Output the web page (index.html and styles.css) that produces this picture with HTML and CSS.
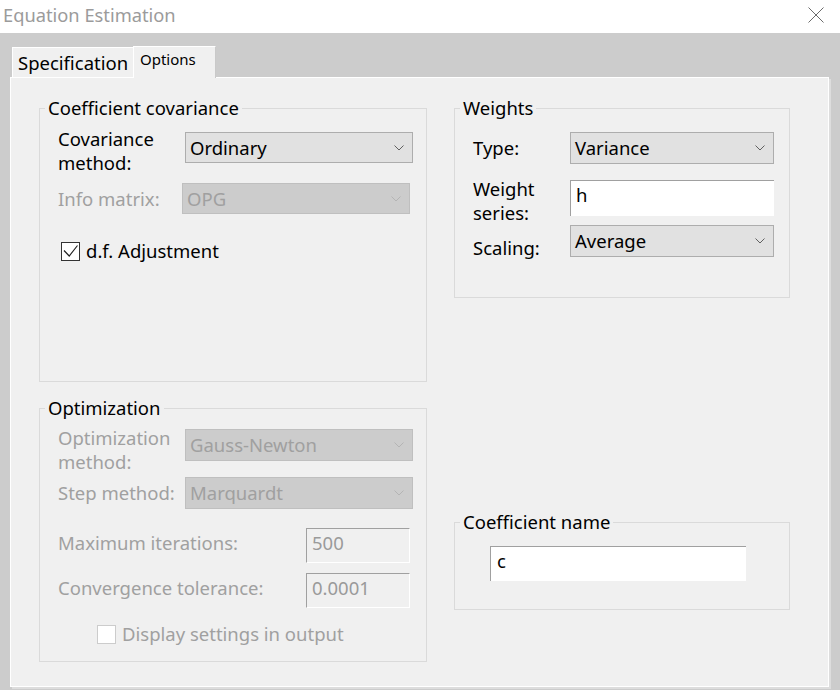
FILE: index.html
```html
<!DOCTYPE html>
<html>
<head>
<meta charset="utf-8">
<title>Equation Estimation</title>
<link rel="stylesheet" href="styles.css">
</head>
<body>
<div class="titlebar">
  <span class="title">Equation Estimation</span>
  <svg class="close" width="16" height="16" viewBox="0 0 16 16"><path d="M0.5 0.5 L15.5 15.5 M15.5 0.5 L0.5 15.5" stroke="#6b6b6b" stroke-width="1" fill="none"/></svg>
</div>
<div class="main">
  <div class="tabs">
    <div class="tab tab-spec">Specification</div>
    <div class="tab tab-active">Options</div>
  </div>
  <div class="panel">
    <div class="col col-left">
      <section class="group g-cov">
        <span class="group-title">Coefficient covariance</span>
        <div class="row row-top">
          <span class="lbl w127">Covariance<br>method:</span>
          <div class="select sel-cov"><span>Ordinary</span><svg class="chev" width="10" height="6" viewBox="0 0 10 6"><polyline points="0.5,0.5 5,5 9.5,0.5" fill="none" stroke="#606060" stroke-width="1"/></svg></div>
        </div>
        <div class="row row-info">
          <span class="lbl w124 dis">Info matrix:</span>
          <div class="select disabled"><span>OPG</span><svg class="chev" width="10" height="6" viewBox="0 0 10 6"><polyline points="0.5,0.5 5,5 9.5,0.5" fill="none" stroke="#b4b4b4" stroke-width="1"/></svg></div>
        </div>
        <div class="row row-check1">
          <span class="check checked"><svg width="17" height="17" viewBox="0 0 17 17"><polyline points="2,7.5 7.2,13 15.5,2.5" fill="none" stroke="#202020" stroke-width="1.2"/></svg></span>
          <span class="check-lbl">d.f. Adjustment</span>
        </div>
      </section>
      <section class="group g-opt">
        <span class="group-title">Optimization</span>
        <div class="row row-top">
          <span class="lbl w127 dis">Optimization<br>method:</span>
          <div class="select disabled sel-opt"><span>Gauss-Newton</span><svg class="chev" width="10" height="6" viewBox="0 0 10 6"><polyline points="0.5,0.5 5,5 9.5,0.5" fill="none" stroke="#b4b4b4" stroke-width="1"/></svg></div>
        </div>
        <div class="row row-step">
          <span class="lbl w127 dis">Step method:</span>
          <div class="select disabled sel-step"><span>Marquardt</span><svg class="chev" width="10" height="6" viewBox="0 0 10 6"><polyline points="0.5,0.5 5,5 9.5,0.5" fill="none" stroke="#b4b4b4" stroke-width="1"/></svg></div>
        </div>
        <div class="row row-num row-iter">
          <span class="lbl w248 dis lbl-num">Maximum iterations:</span>
          <div class="input input-dis input-num">500</div>
        </div>
        <div class="row row-num row-tol">
          <span class="lbl w248 dis lbl-num">Convergence tolerance:</span>
          <div class="input input-dis input-num">0.0001</div>
        </div>
        <div class="row row-check2">
          <span class="check"></span>
          <span class="check-lbl dis">Display settings in output</span>
        </div>
      </section>
    </div>
    <div class="col col-right">
      <section class="group g-weights">
        <span class="group-title">Weights</span>
        <div class="row row-type">
          <span class="lbl w97">Type:</span>
          <div class="select sel-w"><span>Variance</span><svg class="chev" width="10" height="6" viewBox="0 0 10 6"><polyline points="0.5,0.5 5,5 9.5,0.5" fill="none" stroke="#606060" stroke-width="1"/></svg></div>
        </div>
        <div class="row row-series">
          <span class="lbl w97">Weight<br>series:</span>
          <div class="input input-w">h</div>
        </div>
        <div class="row row-scaling">
          <span class="lbl w97 lbl-scaling">Scaling:</span>
          <div class="select sel-w"><span>Average</span><svg class="chev" width="10" height="6" viewBox="0 0 10 6"><polyline points="0.5,0.5 5,5 9.5,0.5" fill="none" stroke="#606060" stroke-width="1"/></svg></div>
        </div>
      </section>
      <section class="group g-coef">
        <span class="group-title">Coefficient name</span>
        <div class="input input-coef">c</div>
      </section>
    </div>
  </div>
</div>
</body>
</html>
```
FILE: styles.css
```css
* { box-sizing: border-box; }
html, body { margin: 0; padding: 0; }
body {
  width: 840px;
  height: 690px;
  overflow: hidden;
  background: #cccccc;
  font-family: "Noto Sans", "Open Sans", sans-serif;
  font-size: 18.5px;
  color: #000;
}
.titlebar {
  height: 33px;
  background: #fff;
  display: flex;
  align-items: center;
  justify-content: space-between;
  padding: 0 16px 0 3px;
}
.title {
  color: #9b9b9b;
  font-size: 18.3px;
  line-height: 28px;
  margin-top: -4px;
}
.close { margin-top: -3px; }
.main {
  padding: 13px 0 0 10px;
}
.tabs {
  display: flex;
  align-items: flex-end;
  height: 31px;
  margin-left: 2px;
  position: relative;
  z-index: 1;
}
.tab {
  background: #f0f0f0;
  border-top: 1px solid #fff;
  border-left: 1px solid #fff;
  height: 30px;
  line-height: 29px;
}
.tab-spec {
  width: 121px;
  padding-left: 5px;
}
.tab-active {
  width: 83px;
  height: 32px;
  margin-bottom: -1px;
  padding-left: 6px;
  font-size: 15px;
  line-height: 24px;
  border-right: 1px solid #c9c9c9;
}
.panel {
  width: 819px;
  height: 610px;
  background: #f0f0f0;
  border-top: 1px solid #fff;
  border-left: 1px solid #fff;
  border-right: 1px solid #fff;
  border-bottom: 1px solid #fff;
  box-shadow: 2px 2px 0 #dddddd;
  display: flex;
  gap: 27px;
  padding: 30px 0 0 28px;
}
.col { display: flex; flex-direction: column; }
.col-left { width: 388px; gap: 26px; }
.col-right { width: 336px; gap: 224px; }
.group {
  position: relative;
  border: 1px solid #dadada;
}
.group-title {
  position: absolute;
  top: -13px;
  left: 5px;
  padding: 0 3px;
  background: #f0f0f0;
  line-height: 24px;
  white-space: nowrap;
}
.g-cov { height: 274px; padding: 18px 0 0 18px; }
.g-opt { height: 254px; padding: 17px 0 0 18px; }
.g-weights { height: 190px; padding: 23px 0 0 18px; }
.g-coef { height: 88px; padding: 23px 0 0 35px; }
.row { display: flex; align-items: center; }
.row-top { align-items: flex-start; }
.row-top .select { margin-top: 5px; }
.g-opt .row-top .select { margin-top: 3px; }
.lbl { line-height: 24px; flex: 0 0 auto; white-space: nowrap; }
.w127 { width: 127px; }
.w124 { width: 124px; }
.w97 { width: 97px; }
.w248 { width: 248px; }
.dis { color: #a0a0a0; }
.select {
  display: flex;
  align-items: center;
  justify-content: space-between;
  width: 228px;
  height: 31px;
  background: #e1e1e1;
  border: 1px solid #adadad;
  padding: 0 8px 0 4px;
  line-height: 24px;
}
.select.disabled {
  background: #cccccc;
  border-color: #bfbfbf;
  color: #a0a0a0;
}
.sel-opt, .sel-step, .sel-w { height: 32px; }
.sel-w { width: 204px; }
.chev { flex: 0 0 auto; }
.row-info { margin-top: 8px; }
.row-check1 { margin-top: 25px; margin-left: 3px; }
.check {
  width: 19px;
  height: 19px;
  background: #fff;
  border: 1px solid #cccccc;
  flex: 0 0 auto;
  display: flex;
  align-items: center;
  justify-content: center;
}
.check.checked { border-color: #333; }
.check-lbl { margin-left: 6px; line-height: 24px; }
.input {
  background: #fff;
  border-top: 1px solid #a0a0a0;
  border-left: 1px solid #a0a0a0;
  line-height: 24px;
  padding: 2px 0 0 5px;
}
.input-dis {
  background: #f0f0f0;
  border-right: 1px solid #fff;
  border-bottom: 1px solid #fff;
  color: #9a9a9a;
}
.input-num { width: 104px; height: 35px; }
.row-step { margin-top: 3px; }
.row-num { align-items: flex-start; }
.lbl-num { margin-top: 3px; }
.row-iter { margin-top: 19px; }
.row-tol { margin-top: 10px; }
.row-check2 { margin-top: 14px; margin-left: 39px; }
.row-series { margin-top: 13px; align-items: flex-start; }
.input-w { width: 204px; height: 36px; margin-top: 3px; }
.row-scaling { align-items: flex-start; }
.lbl-scaling { margin-top: 11px; }
.input-coef { width: 256px; height: 35px; padding-left: 6px; }
```
